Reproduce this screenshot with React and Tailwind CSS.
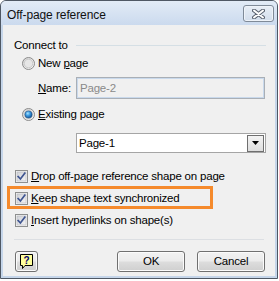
import React from "react";

const font = { fontFamily: '"Liberation Sans", Arial, sans-serif' };

function Radio({ checked }) {
  return (
    <svg width="13" height="13" viewBox="0 0 13 13" className="shrink-0">
      <defs>
        <linearGradient id="rgOuter" x1="0" y1="0" x2="1" y2="1">
          <stop offset="0" stopColor="#d4d4d4" />
          <stop offset="1" stopColor="#fafafa" />
        </linearGradient>
        <radialGradient id="rgDot" cx="0.4" cy="0.35" r="0.7">
          <stop offset="0" stopColor="#a6e3ff" />
          <stop offset="0.45" stopColor="#3c9ae0" />
          <stop offset="1" stopColor="#0e4b8c" />
        </radialGradient>
      </defs>
      <circle cx="6.5" cy="6.5" r="6" fill="url(#rgOuter)" stroke="#8a8a8a" />
      <circle cx="6.5" cy="6.5" r="4.3" fill="#e6e6e6" stroke="#c9c9c9" strokeWidth="1" />
      {checked && <circle cx="6.5" cy="6.5" r="3.6" fill="url(#rgDot)" stroke="#1d4f86" strokeWidth="0.6" />}
    </svg>
  );
}

function Check() {
  return (
    <svg width="13" height="13" viewBox="0 0 13 13" className="shrink-0">
      <defs>
        <linearGradient id="cbIn" x1="0" y1="0" x2="1" y2="1">
          <stop offset="0" stopColor="#cfd1d6" />
          <stop offset="1" stopColor="#f4f4f6" />
        </linearGradient>
      </defs>
      <rect x="0.5" y="0.5" width="12" height="12" fill="#f5f5f5" stroke="#8e8f8f" />
      <rect x="2" y="2" width="9" height="9" fill="url(#cbIn)" stroke="#b4b6bb" strokeWidth="0.6" />
      <path d="M3.2 6.6 L5.4 9 L9.8 3.2" stroke="#3f5591" strokeWidth="1.7" fill="none" strokeLinecap="square" />
    </svg>
  );
}

function WinButton({ className = "", children }) {
  return (
    <div
      className={
        "h-[21px] rounded-[3px] border border-[#707070] flex items-center justify-center text-black shadow-[inset_0_0_0_1px_#fbfbfb] bg-[linear-gradient(to_bottom,#f2f2f2_0%,#ebebeb_48%,#dddddd_52%,#cfcfcf_100%)] " +
        className
      }
    >
      {children}
    </div>
  );
}

function CheckRow({ children, highlight }) {
  return (
    <div className="relative h-[16px] flex items-center pl-[12px] gap-[3px]">
      {highlight && (
        <div className="absolute left-[4px] top-[-4px] w-[206px] h-[23px] border-[3px] border-[#f58a2c] pointer-events-none" />
      )}
      <Check />
      <span className="leading-[16px] text-black whitespace-nowrap">{children}</span>
    </div>
  );
}

export default function App() {
  return (
    <div className="w-[279px] h-[281px] bg-white text-[11.5px] tracking-[-0.2px]" style={font}>
      <div className="w-[278px] h-[279px] border border-[#4f5864] rounded-t-[6px] bg-[#c6d6ea] flex flex-col overflow-hidden">
        {/* Title bar */}
        <div className="h-[24px] shrink-0 flex items-start justify-between pl-[6px] pr-[3px] bg-[linear-gradient(to_bottom,#e2ebf6,#cbdaee)]">
          <span className="text-[12px] tracking-[-0.1px] leading-[16px] mt-[6px] text-[#111]">Off-page reference</span>
          <div className="mt-[4px] w-[31px] h-[17px] rounded-[3px] border border-[#7f8a98] flex items-center justify-center shadow-[inset_0_0_0_1px_#eef3f9] bg-[linear-gradient(to_bottom,#e8eef6,#d3deec)]">
            <svg width="13" height="10" viewBox="0 0 13 10">
              <path d="M2 1.5 L11 8.5 M11 1.5 L2 8.5" stroke="#5a6270" strokeWidth="4" strokeLinecap="round" />
              <path d="M2 1.5 L11 8.5 M11 1.5 L2 8.5" stroke="#ffffff" strokeWidth="2" strokeLinecap="round" />
            </svg>
          </div>
        </div>

        {/* Client area */}
        <div className="mx-[2px] h-[251px] bg-[#f0f0f0] flex flex-col">
          {/* Group header */}
          <div className="mt-[12px] h-[16px] flex items-center pl-[11px] pr-[9px]">
            <span className="leading-[16px] text-black">Connect to</span>
            <div className="ml-[8px] flex-1 h-px bg-[#d5dfe5]" />
          </div>

          {/* New page */}
          <div className="mt-[2px] h-[16px] flex items-center pl-[19px] gap-[3px]">
            <Radio />
            <span className="leading-[16px] text-black">
              New <span className="underline">p</span>age
            </span>
          </div>

          {/* Name */}
          <div className="mt-[6px] h-[22px] flex items-center pl-[35px]">
            <span className="w-[38px] leading-[16px] text-black">
              <span className="underline">N</span>ame:
            </span>
            <div className="w-[189px] h-[22px] border border-[#a9afb6] shadow-[inset_0_0_0_1px_#c9d9ec] bg-[#f0f0f0] flex items-center pl-[3px]">
              <span className="leading-[16px] text-[#8a8a8a]">Page-2</span>
            </div>
          </div>

          {/* Existing page */}
          <div className="mt-[7px] h-[16px] flex items-center pl-[19px] gap-[3px]">
            <Radio checked />
            <span className="leading-[16px] text-black">
              <span className="underline">E</span>xisting page
            </span>
          </div>

          {/* Dropdown */}
          <div className="mt-[11px] ml-[73px] w-[190px] h-[20px] border border-[#a5a5a5] bg-white flex items-center justify-between pl-[2px] pr-[1px]">
            <span className="leading-[16px] text-black">Page-1</span>
            <div className="w-[17px] h-[17px] border border-[#6f6f6f] bg-[linear-gradient(to_bottom,#f3f3f3,#dedede)] flex items-center justify-center">
              <svg width="7" height="4" viewBox="0 0 7 4">
                <path d="M0 0 H7 L3.5 4 Z" fill="#000" />
              </svg>
            </div>
          </div>

          {/* Checkboxes */}
          <div className="mt-[15px] flex flex-col gap-[6px]">
            <CheckRow>
              <span className="underline">D</span>rop off-page reference shape on page
            </CheckRow>
            <CheckRow highlight>
              <span className="underline">K</span>eep shape text synchronized
            </CheckRow>
            <CheckRow>
              <span className="underline">I</span>nsert hyperlinks on shape(s)
            </CheckRow>
          </div>

          {/* Separator */}
          <div className="mt-[11px] mx-[11px] h-px bg-[#dcdfe3]" />

          {/* Buttons */}
          <div className="mt-[11px] flex items-center pl-[12px] pr-[10px]">
            <WinButton className="w-[23px]">
              <svg width="13" height="15" viewBox="0 0 13 15">
                <path d="M0.5 0.5 H12.5 V11.5 H5 L2.5 14.5 V11.5 H0.5 Z" fill="#ffff9c" stroke="#000" />
                <text x="6.5" y="10" textAnchor="middle" fontSize="10" fontWeight="bold" fill="#00006e" fontFamily="Liberation Sans, sans-serif">?</text>
              </svg>
            </WinButton>
            <div className="flex-1" />
            <WinButton className="w-[68px]">OK</WinButton>
            <WinButton className="w-[68px] ml-[12px]">Cancel</WinButton>
          </div>
        </div>
      </div>
    </div>
  );
}
